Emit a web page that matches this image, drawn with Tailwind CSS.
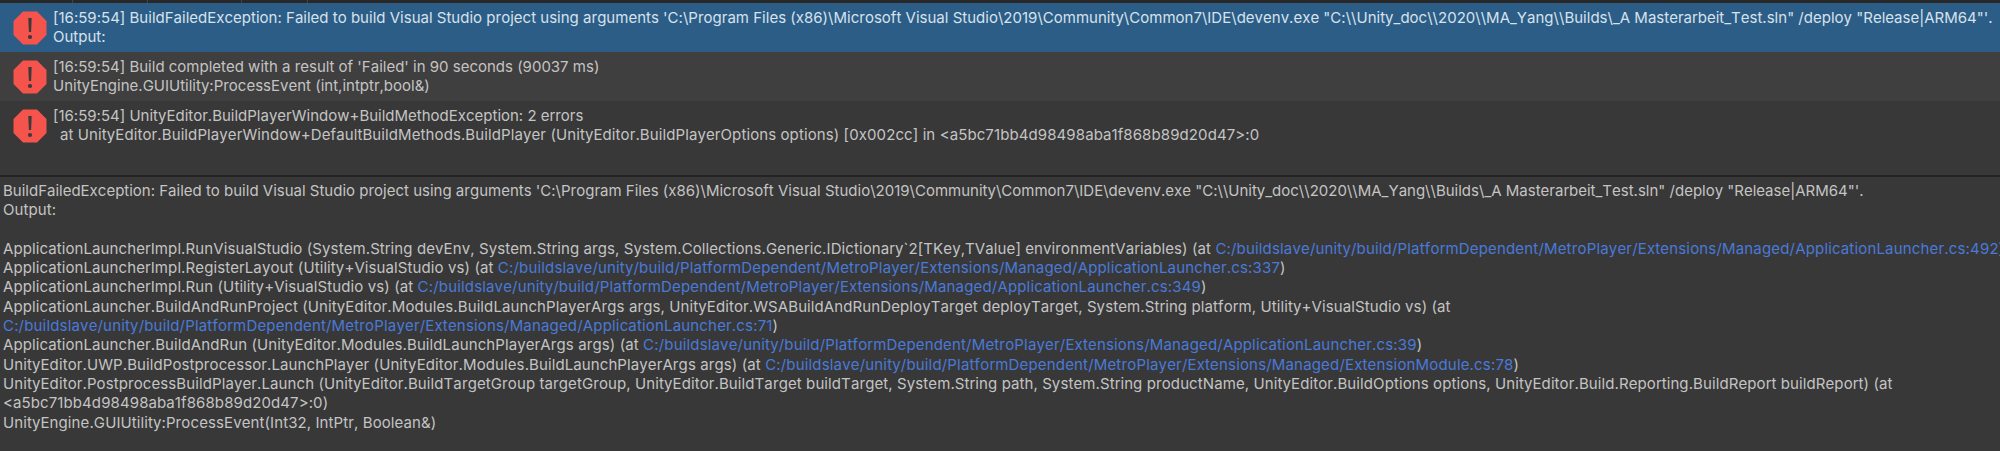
<!DOCTYPE html>
<html lang="en">
<head>
<meta charset="UTF-8">
<title>Console</title>
<script src="https://cdn.jsdelivr.net/npm/@tailwindcss/browser@4"></script>
</head>
<body class="w-[2000px] h-[451px] overflow-hidden bg-[#383838] font-['Inter',sans-serif] [font-kerning:none] [font-feature-settings:'calt'_0] text-[15px] leading-[19.3px] text-[#c4c4c4] whitespace-nowrap">
  <!-- tab strip edge -->
  <div class="h-[3px] bg-[#282828] flex">
    <div class="w-[73px] border-r border-[#444]"></div>
    <div class="w-[75px] border-r border-[#444]"></div>
    <div class="w-[94px] border-r border-[#444]"></div>
    <div class="w-[66px] border-r border-[#444]"></div>
  </div>

  <!-- log list -->
  <div class="h-[174px] flex flex-col border-b-2 border-[#232323]">
    <div class="h-[49px] bg-[#2c5d87] text-[#d6e2ec] flex">
      <svg class="w-[36px] h-[36px] ml-[12px] mt-[7px] shrink-0" viewBox="0 0 36 36"><path d="M11 1.5h14L34.500 11v14L25 34.500H11L1.500 25V11z" fill="#f4544c"/><path d="M16.300 8h3.400l-.6 14h-2.200z" fill="#3a3a3a"/><circle cx="18" cy="27" r="2.100" fill="#3a3a3a"/></svg>
      <div class="ml-[5px] pt-[5px]">
        <div class="tracking-[0.01px]">[16:59:54] BuildFailedException: Failed to build Visual Studio project using arguments 'C:\Program Files (x86)\Microsoft Visual Studio\2019\Community\Common7\IDE\devenv.exe "C:\\Unity_doc\\2020\\MA_Yang\\Builds\_A Masterarbeit_Test.sln" /deploy "Release|ARM64"'.</div>
        <div>Output:</div>
      </div>
    </div>
    <div class="h-[49px] bg-[#3f3f3f] flex">
      <svg class="w-[36px] h-[36px] ml-[12px] mt-[7px] shrink-0" viewBox="0 0 36 36"><path d="M11 1.5h14L34.500 11v14L25 34.500H11L1.500 25V11z" fill="#f4544c"/><path d="M16.300 8h3.400l-.6 14h-2.200z" fill="#3a3a3a"/><circle cx="18" cy="27" r="2.100" fill="#3a3a3a"/></svg>
      <div class="ml-[5px] pt-[5px]">
        <div>[16:59:54] Build completed with a result of 'Failed' in 90 seconds (90037 ms)</div>
        <div>UnityEngine.GUIUtility:ProcessEvent (int,intptr,bool&amp;)</div>
      </div>
    </div>
    <div class="flex-1 flex">
      <svg class="w-[36px] h-[36px] ml-[12px] mt-[7px] shrink-0" viewBox="0 0 36 36"><path d="M11 1.5h14L34.500 11v14L25 34.500H11L1.500 25V11z" fill="#f4544c"/><path d="M16.300 8h3.400l-.6 14h-2.200z" fill="#3a3a3a"/><circle cx="18" cy="27" r="2.100" fill="#3a3a3a"/></svg>
      <div class="ml-[5px] pt-[5px]">
        <div>[16:59:54] UnityEditor.BuildPlayerWindow+BuildMethodException: 2 errors</div>
        <div class="pl-[7px] tracking-[0.1px]">at UnityEditor.BuildPlayerWindow+DefaultBuildMethods.BuildPlayer (UnityEditor.BuildPlayerOptions options) [0x002cc] in &lt;a5bc71bb4d98498aba1f868b89d20d47&gt;:0</div>
      </div>
    </div>
  </div>

  <!-- detail panel -->
  <div class="pl-[3px] pt-[4px] tracking-[0.1px]">
    <div class="tracking-normal">BuildFailedException: Failed to build Visual Studio project using arguments 'C:\Program Files (x86)\Microsoft Visual Studio\2019\Community\Common7\IDE\devenv.exe "C:\\Unity_doc\\2020\\MA_Yang\\Builds\_A Masterarbeit_Test.sln" /deploy "Release|ARM64"'.</div>
    <div>Output:</div>
    <div class="h-[19.3px]"></div>
    <div>ApplicationLauncherImpl.RunVisualStudio (System.String devEnv, System.String args, System.Collections.Generic.IDictionary`2[TKey,TValue] environmentVariables) (at <a class="text-[#4a7ad8] tracking-[0.17px]">C:/buildslave/unity/build/PlatformDependent/MetroPlayer/Extensions/Managed/ApplicationLauncher.cs:492</a>)</div>
    <div>ApplicationLauncherImpl.RegisterLayout (Utility+VisualStudio vs) (at <a class="text-[#4a7ad8] tracking-[0.17px]">C:/buildslave/unity/build/PlatformDependent/MetroPlayer/Extensions/Managed/ApplicationLauncher.cs:337</a>)</div>
    <div>ApplicationLauncherImpl.Run (Utility+VisualStudio vs) (at <a class="text-[#4a7ad8] tracking-[0.17px]">C:/buildslave/unity/build/PlatformDependent/MetroPlayer/Extensions/Managed/ApplicationLauncher.cs:349</a>)</div>
    <div>ApplicationLauncher.BuildAndRunProject (UnityEditor.Modules.BuildLaunchPlayerArgs args, UnityEditor.WSABuildAndRunDeployTarget deployTarget, System.String platform, Utility+VisualStudio vs) (at</div>
    <div><a class="text-[#4a7ad8] tracking-[0.17px]">C:/buildslave/unity/build/PlatformDependent/MetroPlayer/Extensions/Managed/ApplicationLauncher.cs:71</a>)</div>
    <div>ApplicationLauncher.BuildAndRun (UnityEditor.Modules.BuildLaunchPlayerArgs args) (at <a class="text-[#4a7ad8] tracking-[0.17px]">C:/buildslave/unity/build/PlatformDependent/MetroPlayer/Extensions/Managed/ApplicationLauncher.cs:39</a>)</div>
    <div>UnityEditor.UWP.BuildPostprocessor.LaunchPlayer (UnityEditor.Modules.BuildLaunchPlayerArgs args) (at <a class="text-[#4a7ad8] tracking-[0.17px]">C:/buildslave/unity/build/PlatformDependent/MetroPlayer/Extensions/Managed/ExtensionModule.cs:78</a>)</div>
    <div>UnityEditor.PostprocessBuildPlayer.Launch (UnityEditor.BuildTargetGroup targetGroup, UnityEditor.BuildTarget buildTarget, System.String path, System.String productName, UnityEditor.BuildOptions options, UnityEditor.Build.Reporting.BuildReport buildReport) (at</div>
    <div>&lt;a5bc71bb4d98498aba1f868b89d20d47&gt;:0)</div>
    <div>UnityEngine.GUIUtility:ProcessEvent(Int32, IntPtr, Boolean&amp;)</div>
  </div>
</body>
</html>
